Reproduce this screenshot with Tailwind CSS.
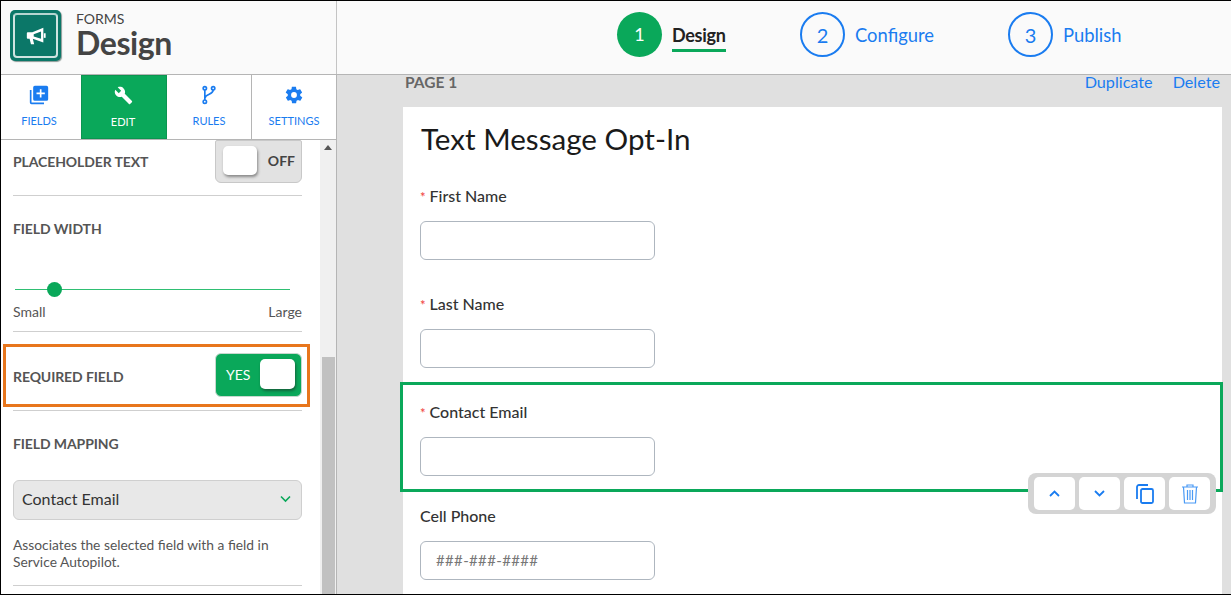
<!DOCTYPE html>
<html lang="en">
<head>
  <meta charset="UTF-8">
  <title>Forms Design</title>
  <script src="https://cdn.jsdelivr.net/npm/@tailwindcss/browser@4"></script>
</head>
<body class="font-['Lato','Open_Sans',sans-serif] overflow-hidden">
<div class="w-[1231px] h-[595px] border-t border-l border-b border-black flex flex-col overflow-hidden">

  <!-- top bar -->
  <header class="h-[74px] shrink-0 flex bg-[#fafafa] border-b border-[#b5b5b5]">
    <div class="w-[336px] shrink-0 flex pt-[9px] pl-[9px] border-r border-[#c4c4c4]">
      <div class="w-[51px] h-[51px] rounded-[5px] bg-[#0b7768] shadow-[1px_1px_1px_#8a9a96] flex items-center justify-center relative">
        <div class="absolute inset-[3px] rounded-[4px] border-2 border-white/80 border-t-white/70"></div>
        <svg width="22" height="22" viewBox="0 0 24 24" fill="#fff"><path d="M20 3 L8 8 H3 a1 1 0 0 0 -1 1 v5 a1 1 0 0 0 1 1 h2 l1.5 6 h3.5 l-1.5-6 L20 19 Z M17.5 7 v8 L9.500 12.600 V10 Z" fill-rule="evenodd"/><rect x="20.500" y="9" width="2" height="5"/></svg>
      </div>
      <div class="ml-[15px] text-[#444]">
        <div class="text-[14px] leading-[17px]">FORMS</div>
        <div class="text-[32px] leading-[32px] font-bold tracking-[-0.4px]">Design</div>
      </div>
    </div>
    <nav class="flex-1 flex pl-[280px] pt-[11px]">
      <div class="flex items-start w-[183px]">
        <div class="w-[45px] h-[45px] rounded-full bg-[#0aa85a] text-white text-[18px] flex items-center justify-center">1</div>
        <div class="ml-[10px] mt-[10px] text-[18px] leading-[27px] font-bold tracking-[-0.3px] text-[#222] border-b-[3px] border-[#0aa85a] h-[30px]">Design</div>
      </div>
      <div class="flex items-start w-[208px]">
        <div class="w-[45px] h-[45px] rounded-full border-2 border-[#1a7cf0] text-[#1a7cf0] text-[20px] flex items-center justify-center">2</div>
        <div class="ml-[10px] mt-[10px] text-[18.4px] leading-[27px] text-[#1a7cf0]">Configure</div>
      </div>
      <div class="flex items-start">
        <div class="w-[45px] h-[45px] rounded-full border-2 border-[#1a7cf0] text-[#1a7cf0] text-[20px] flex items-center justify-center">3</div>
        <div class="ml-[10px] mt-[10px] text-[18.4px] leading-[27px] text-[#1a7cf0]">Publish</div>
      </div>
    </nav>
  </header>

  <div class="flex-1 flex min-h-0">
    <!-- left panel -->
    <aside class="w-[336px] shrink-0 flex flex-col border-r border-[#b5b5b5] bg-white">
      <div class="h-[65px] shrink-0 flex border-b border-[#b5b5b5] text-[11px] text-[#1a7cf0]">
        <div class="w-[80px] flex flex-col items-center pt-[10px] pr-[4px]">
          <svg width="20" height="20" viewBox="0 0 24 24" fill="#1a7cf0"><path d="M3 6H1v15a2 2 0 0 0 2 2h15v-2H3z"/><path d="M21 1H7a2 2 0 0 0-2 2v14a2 2 0 0 0 2 2h14a2 2 0 0 0 2-2V3a2 2 0 0 0-2-2zm-2 10h-4v4h-2v-4H9V9h4V5h2v4h4z"/></svg>
          <span class="mt-[8px]">FIELDS</span>
        </div>
        <div class="w-[86px] flex flex-col items-center pt-[10px] pr-[2px] bg-[#0aa85a] border border-[#0b9550] text-white">
          <svg width="19" height="19" viewBox="0 0 24 24" fill="#fff"><path d="M22.700 19l-9.100-9.100c.9-2.300.4-5-1.500-6.900-2-2-5-2.400-7.400-1.300L9 6 6 9 1.600 4.700C.4 7.100.9 10.100 2.900 12.100c1.900 1.900 4.600 2.400 6.900 1.500l9.100 9.100c.4.400 1 .4 1.400 0l2.300-2.300c.5-.4.5-1.100.1-1.400z"/></svg>
          <span class="mt-[9px]">EDIT</span>
        </div>
        <div class="w-[85px] flex flex-col items-center pt-[10px] border-r border-[#b5b5b5]">
          <svg width="20" height="20" viewBox="0 0 24 24" fill="none" stroke="#1a7cf0" stroke-width="2"><circle cx="7" cy="4" r="2"/><circle cx="17" cy="4" r="2"/><circle cx="7" cy="20" r="2"/><path d="M7 6v12M17 6c0 6-9 4-10 10"/></svg>
          <span class="mt-[8px]">RULES</span>
        </div>
        <div class="flex-1 flex flex-col items-center pt-[10px]">
          <svg width="20" height="20" viewBox="0 0 24 24" fill="#1a7cf0"><path d="M19.400 13c.1-.3.1-.7.1-1s0-.7-.1-1l2.100-1.600c.2-.2.200-.4.100-.6l-2-3.500c-.1-.2-.4-.3-.6-.2l-2.500 1c-.5-.4-1.100-.7-1.700-1l-.4-2.600c0-.3-.2-.5-.5-.5h-4c-.3 0-.5.2-.5.400l-.4 2.700c-.6.200-1.100.6-1.700 1l-2.500-1c-.2-.1-.5 0-.6.200l-2 3.500c-.1.200-.1.500.1.600L4.600 11c-.1.300-.1.700-.1 1s0 .7.100 1l-2.100 1.600c-.2.200-.2.400-.1.600l2 3.500c.1.200.4.300.6.200l2.500-1c.5.400 1.100.7 1.700 1l.4 2.600c0 .3.200.5.500.5h4c.3 0 .5-.2.500-.4l.4-2.700c.6-.2 1.100-.6 1.700-1l2.500 1c.2.100.5 0 .6-.2l2-3.500c.1-.2.100-.5-.1-.6zM12 15.500a3.500 3.500 0 1 1 0-7 3.500 3.500 0 0 1 0 7z"/></svg>
          <span class="mt-[8px]">SETTINGS</span>
        </div>
      </div>

      <div class="flex-1 flex min-h-0">
        <div class="w-[319px] shrink-0 relative overflow-hidden">
          <div class="mx-[12px] w-[289px]">
            <div class="h-[56px] flex justify-between border-b border-[#cfcfcf]">
              <span class="mt-[13px] text-[14px] leading-[17px] font-bold text-[#555] tracking-[-0.1px]">PLACEHOLDER TEXT</span>
              <div class="w-[87px] h-[43px] rounded-b-[6px] rounded-t-[2px] bg-[#e2e2e2] border border-[#c8c8c8] flex items-start pt-[5px] pl-[7px] pr-[6px] justify-between">
                <div class="w-[34px] h-[29px] rounded-[5px] bg-white shadow-[1px_2px_3px_#888]"></div>
                <span class="text-[14px] leading-[17px] mt-[6px] font-bold text-[#444]">OFF</span>
              </div>
            </div>

            <div class="h-[136px] border-b border-[#cfcfcf] relative">
              <div class="pt-[24px] text-[14px] leading-[17px] font-bold text-[#555] tracking-[-0.1px]">FIELD WIDTH</div>
              <div class="mt-[52px] mx-[2px] w-[275px] h-px bg-[#2fbf73] relative">
                <div class="absolute left-[32px] -top-[7px] w-[15px] h-[15px] rounded-full bg-[#0aa85a]"></div>
              </div>
              <div class="mt-[13px] flex justify-between text-[14px] leading-[17px] text-[#555]">
                <span>Small</span><span>Large</span>
              </div>
            </div>

            <div class="h-[79px] border-b border-[#cfcfcf] flex justify-between items-start relative">
              <div class="absolute -left-[10px] top-[12px] w-[307px] h-[63px] border-[3px] border-[#e8761c]"></div>
              <span class="mt-[36px] text-[14px] leading-[17px] font-bold text-[#555] tracking-[-0.1px]">REQUIRED FIELD</span>
              <div class="mt-[21px] w-[87px] h-[44px] rounded-[6px] bg-[#0aa85a] border border-[#c8d8cf] flex items-start pt-[5px] pl-[10px] pr-[6px] justify-between relative">
                <span class="mt-[7px] text-[14px] leading-[17px] text-white">YES</span>
                <div class="w-[35px] h-[30px] rounded-[5px] bg-white shadow-[1px_2px_3px_#14633c]"></div>
              </div>
            </div>

            <div class="h-[175px] border-b border-[#cfcfcf]">
              <div class="pt-[24px] text-[14px] leading-[17px] font-bold text-[#555] tracking-[-0.1px]">FIELD MAPPING</div>
              <div class="mt-[28px] h-[40px] rounded-[6px] bg-[#e8e8e8] border border-[#cfcfcf] flex items-center justify-between pl-[8px] pr-[10px] pb-[2px] text-[16px] text-[#333]">
                <span>Contact Email</span>
                <svg width="11" height="8" viewBox="0 0 11 8" fill="none" stroke="#0aa85a" stroke-width="1.600"><path d="M1 1.500l4.500 4.500L10 1.500"/></svg>
              </div>
              <p class="mt-[16px] text-[13.8px] leading-[17px] text-[#555]">Associates the selected field with a field in<br>Service Autopilot.</p>
            </div>
          </div>
        </div>
        <!-- scrollbar -->
        <div class="flex-1 bg-[#f0f0f0] flex flex-col items-center pt-[5px]">
          <svg width="8" height="5" viewBox="0 0 8 5" fill="#555"><path d="M4 0l4 5H0z"/></svg>
          <div class="mt-[207px] w-[13px] flex-1 bg-[#c1c1c1]"></div>
        </div>
      </div>
    </aside>

    <!-- canvas -->
    <main class="flex-1 bg-[#e0e0e0] pl-[66px] pr-[9px]">
      <div class="h-[32px] flex justify-between pr-[2px] leading-[14px]">
        <span class="ml-[2px] font-bold text-[#666] text-[15.5px]">PAGE 1</span>
        <div class="flex gap-[20px] text-[16.2px] text-[#1a7cf0]"><span>Duplicate</span><span>Delete</span></div>
      </div>
      <div class="bg-white h-[488px] pl-[17px] relative">
        <h1 class="pt-[14px] pl-[1px] text-[29.6px] leading-[36px] text-[#1a1a1a]">Text Message Opt-In</h1>

        <div class="mt-[29px] h-[108px]">
          <div class="text-[16px] leading-[20px] font-medium text-[#333]"><span class="text-[#f04040] text-[13px] mr-[4px]">*</span>First Name</div>
          <div class="mt-[14px] w-[235px] h-[39px] rounded-[6px] border border-[#aeb6bf]"></div>
        </div>
        <div class="h-[108px]">
          <div class="text-[16px] leading-[20px] font-medium text-[#333]"><span class="text-[#f04040] text-[13px] mr-[4px]">*</span>Last Name</div>
          <div class="mt-[14px] w-[235px] h-[39px] rounded-[6px] border border-[#aeb6bf]"></div>
        </div>
        <div class="h-[104px] relative">
          <div class="absolute -left-[20px] -top-[20px] w-[823px] h-[110px] border-[3px] border-[#0aa85a]"></div>
          <div class="text-[16px] leading-[20px] font-medium text-[#333]"><span class="text-[#f04040] text-[13px] mr-[4px]">*</span>Contact Email</div>
          <div class="mt-[14px] w-[235px] h-[39px] rounded-[6px] border border-[#aeb6bf]"></div>
          <!-- field actions -->
          <div class="absolute left-[608px] top-[71px] w-[188px] h-[41px] rounded-[8px] bg-[#d4d4d4] flex items-center justify-center gap-[4px]">
            <div class="w-[41px] h-[33px] rounded-[5px] bg-white flex items-center justify-center">
              <svg width="11" height="7" viewBox="0 0 11 7" fill="none" stroke="#1a7cf0" stroke-width="1.800"><path d="M1 6l4.500-4.500L10 6"/></svg>
            </div>
            <div class="w-[41px] h-[33px] rounded-[5px] bg-white flex items-center justify-center">
              <svg width="11" height="7" viewBox="0 0 11 7" fill="none" stroke="#1a7cf0" stroke-width="1.800"><path d="M1 1l4.500 4.500L10 1"/></svg>
            </div>
            <div class="w-[41px] h-[33px] rounded-[5px] bg-white flex items-center justify-center">
              <svg width="18" height="20" viewBox="0 0 18 20" fill="none" stroke="#1a7cf0" stroke-width="1.800"><path d="M12 1H3a2 2 0 0 0-2 2v12"/><rect x="5" y="5" width="12" height="14" rx="1.500"/></svg>
            </div>
            <div class="w-[41px] h-[33px] rounded-[5px] bg-white flex items-center justify-center">
              <svg width="18" height="21" viewBox="0 0 18 21" fill="none" stroke="#4a9af5" stroke-width="1.200"><path d="M1 4h16M6 4V2h6v2M2.500 4l1 16h11l1-16M6.500 7v10M9 7v10M11.500 7v10"/></svg>
            </div>
          </div>
        </div>
        <div class="text-[16px] leading-[20px] font-medium text-[#333]">Cell Phone</div>
        <div class="mt-[15px] w-[235px] h-[39px] rounded-[6px] border border-[#aeb6bf] flex items-center pl-[15px] text-[15px] tracking-[0.35px] text-[#777]">###-###-####</div>
      </div>
    </main>
  </div>
</div>
</body>
</html>
